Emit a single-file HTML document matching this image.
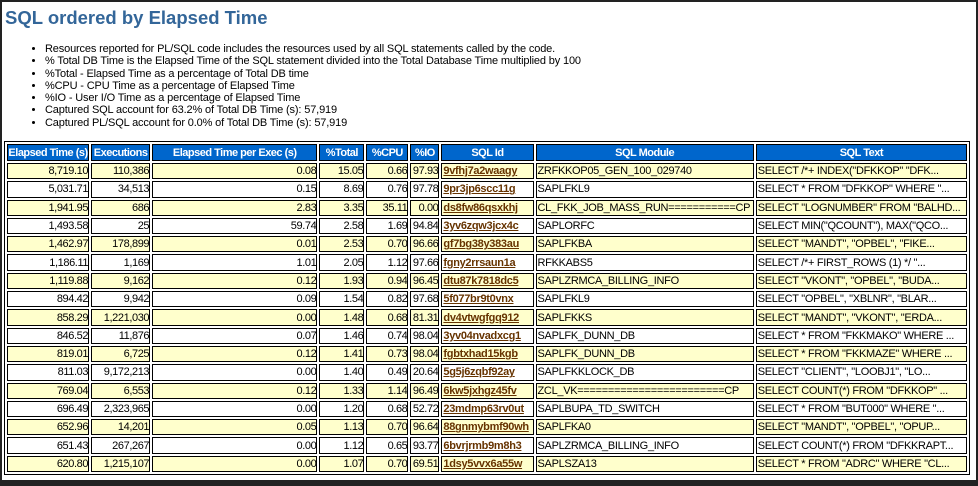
<!DOCTYPE html>
<html><head><meta charset="utf-8">
<style>
html,body{margin:0;padding:0;}
body{width:978px;height:486px;background:#222;position:relative;overflow:hidden;font-family:"Liberation Sans",Arial,sans-serif;}
#page{position:absolute;left:2px;top:2px;width:974px;height:478px;background:#fff;}
h1{position:absolute;left:3px;top:5px;margin:0;font-size:18.5px;font-weight:bold;color:#336699;}
ul{position:absolute;left:0;top:41px;margin:0;padding-left:43px;font-size:11px;letter-spacing:-0.15px;line-height:12.3px;color:#000;}
li{margin:0;}
table{position:absolute;left:2px;top:139px;border:1px solid #000;border-spacing:2px;table-layout:fixed;width:966px;font-size:11px;letter-spacing:-0.3px;}
td,th{border:1px solid #000;padding:0 1px;height:14.3px;line-height:14px;white-space:nowrap;overflow:hidden;}
td.r{padding:0 0 0 1px;letter-spacing:-0.4px;}
th{background:#0066cc;color:#fff;font-weight:bold;height:15px;text-align:center;letter-spacing:-0.5px;padding:0;}
tr.a td{background:#ffffcc;}
td.r{text-align:right;}
a{color:#663300;font-weight:bold;text-decoration:underline;}
</style></head><body><div id="page">
<h1>SQL ordered by Elapsed Time</h1>
<ul>
<li>Resources reported for PL/SQL code includes the resources used by all SQL statements called by the code.</li>
<li>% Total DB Time is the Elapsed Time of the SQL statement divided into the Total Database Time multiplied by 100</li>
<li>%Total - Elapsed Time as a percentage of Total DB time</li>
<li>%CPU - CPU Time as a percentage of Elapsed Time</li>
<li>%IO - User I/O Time as a percentage of Elapsed Time</li>
<li>Captured SQL account for 63.2% of Total DB Time (s): 57,919</li>
<li>Captured PL/SQL account for 0.0% of Total DB Time (s): 57,919</li>
</ul>
<table>
<colgroup><col style="width:82px"><col style="width:59px"><col style="width:165px"><col style="width:45px"><col style="width:42px"><col style="width:29px"><col style="width:92px"><col style="width:218px"><col style="width:211px"></colgroup>
<tr><th>Elapsed Time (s)</th><th>Executions</th><th>Elapsed Time per Exec (s)</th><th>%Total</th><th>%CPU</th><th>%IO</th><th>SQL Id</th><th>SQL Module</th><th>SQL Text</th></tr>
<tr class="a"><td class="r">8,719.10</td><td class="r">110,386</td><td class="r">0.08</td><td class="r">15.05</td><td class="r">0.66</td><td class="r">97.93</td><td><a>9vfhj7a2waagy</a></td><td>ZRFKKOP05_GEN_100_029740</td><td>SELECT /*+ INDEX("DFKKOP" "DFK...</td></tr>
<tr><td class="r">5,031.71</td><td class="r">34,513</td><td class="r">0.15</td><td class="r">8.69</td><td class="r">0.76</td><td class="r">97.78</td><td><a>9pr3jp6scc11g</a></td><td>SAPLFKL9</td><td>SELECT * FROM "DFKKOP" WHERE "...</td></tr>
<tr class="a"><td class="r">1,941.95</td><td class="r">686</td><td class="r">2.83</td><td class="r">3.35</td><td class="r">35.11</td><td class="r">0.00</td><td><a>ds8fw86qsxkhj</a></td><td>CL_FKK_JOB_MASS_RUN===========CP</td><td>SELECT "LOGNUMBER" FROM "BALHD...</td></tr>
<tr><td class="r">1,493.58</td><td class="r">25</td><td class="r">59.74</td><td class="r">2.58</td><td class="r">1.69</td><td class="r">94.84</td><td><a>3yv6zqw3jcx4c</a></td><td>SAPLORFC</td><td>SELECT MIN("QCOUNT"), MAX("QCO...</td></tr>
<tr class="a"><td class="r">1,462.97</td><td class="r">178,899</td><td class="r">0.01</td><td class="r">2.53</td><td class="r">0.70</td><td class="r">96.66</td><td><a>gf7bg38y383au</a></td><td>SAPLFKBA</td><td>SELECT "MANDT", "OPBEL", "FIKE...</td></tr>
<tr><td class="r">1,186.11</td><td class="r">1,169</td><td class="r">1.01</td><td class="r">2.05</td><td class="r">1.12</td><td class="r">97.66</td><td><a>fgny2rrsaun1a</a></td><td>RFKKABS5</td><td>SELECT /*+ FIRST_ROWS (1) */ "...</td></tr>
<tr class="a"><td class="r">1,119.88</td><td class="r">9,162</td><td class="r">0.12</td><td class="r">1.93</td><td class="r">0.94</td><td class="r">96.45</td><td><a>dtu87k7818dc5</a></td><td>SAPLZRMCA_BILLING_INFO</td><td>SELECT "VKONT", "OPBEL", "BUDA...</td></tr>
<tr><td class="r">894.42</td><td class="r">9,942</td><td class="r">0.09</td><td class="r">1.54</td><td class="r">0.82</td><td class="r">97.68</td><td><a>5f077br9t0vnx</a></td><td>SAPLFKL9</td><td>SELECT "OPBEL", "XBLNR", "BLAR...</td></tr>
<tr class="a"><td class="r">858.29</td><td class="r">1,221,030</td><td class="r">0.00</td><td class="r">1.48</td><td class="r">0.68</td><td class="r">81.31</td><td><a>dv4vtwgfgq912</a></td><td>SAPLFKKS</td><td>SELECT "MANDT", "VKONT", "ERDA...</td></tr>
<tr><td class="r">846.52</td><td class="r">11,876</td><td class="r">0.07</td><td class="r">1.46</td><td class="r">0.74</td><td class="r">98.04</td><td><a>3yv04nvadxcg1</a></td><td>SAPLFK_DUNN_DB</td><td>SELECT * FROM "FKKMAKO" WHERE ...</td></tr>
<tr class="a"><td class="r">819.01</td><td class="r">6,725</td><td class="r">0.12</td><td class="r">1.41</td><td class="r">0.73</td><td class="r">98.04</td><td><a>fgbtxhad15kgb</a></td><td>SAPLFK_DUNN_DB</td><td>SELECT * FROM "FKKMAZE" WHERE ...</td></tr>
<tr><td class="r">811.03</td><td class="r">9,172,213</td><td class="r">0.00</td><td class="r">1.40</td><td class="r">0.49</td><td class="r">20.64</td><td><a>5g5j6zqbf92ay</a></td><td>SAPLFKKLOCK_DB</td><td>SELECT "CLIENT", "LOOBJ1", "LO...</td></tr>
<tr class="a"><td class="r">769.04</td><td class="r">6,553</td><td class="r">0.12</td><td class="r">1.33</td><td class="r">1.14</td><td class="r">96.49</td><td><a>6kw5jxhgz45fv</a></td><td>ZCL_VK========================CP</td><td>SELECT COUNT(*) FROM "DFKKOP" ...</td></tr>
<tr><td class="r">696.49</td><td class="r">2,323,965</td><td class="r">0.00</td><td class="r">1.20</td><td class="r">0.68</td><td class="r">52.72</td><td><a>23mdmp63rv0ut</a></td><td>SAPLBUPA_TD_SWITCH</td><td>SELECT * FROM "BUT000" WHERE "...</td></tr>
<tr class="a"><td class="r">652.96</td><td class="r">14,201</td><td class="r">0.05</td><td class="r">1.13</td><td class="r">0.70</td><td class="r">96.64</td><td><a>88gnmybmf90wh</a></td><td>SAPLFKA0</td><td>SELECT "MANDT", "OPBEL", "OPUP...</td></tr>
<tr><td class="r">651.43</td><td class="r">267,267</td><td class="r">0.00</td><td class="r">1.12</td><td class="r">0.65</td><td class="r">93.77</td><td><a>6bvrjrmb9m8h3</a></td><td>SAPLZRMCA_BILLING_INFO</td><td>SELECT COUNT(*) FROM "DFKKRAPT...</td></tr>
<tr class="a"><td class="r">620.80</td><td class="r">1,215,107</td><td class="r">0.00</td><td class="r">1.07</td><td class="r">0.70</td><td class="r">69.51</td><td><a>1dsy5vvx6a55w</a></td><td>SAPLSZA13</td><td>SELECT * FROM "ADRC" WHERE "CL...</td></tr>
</table>
</div></body></html>
